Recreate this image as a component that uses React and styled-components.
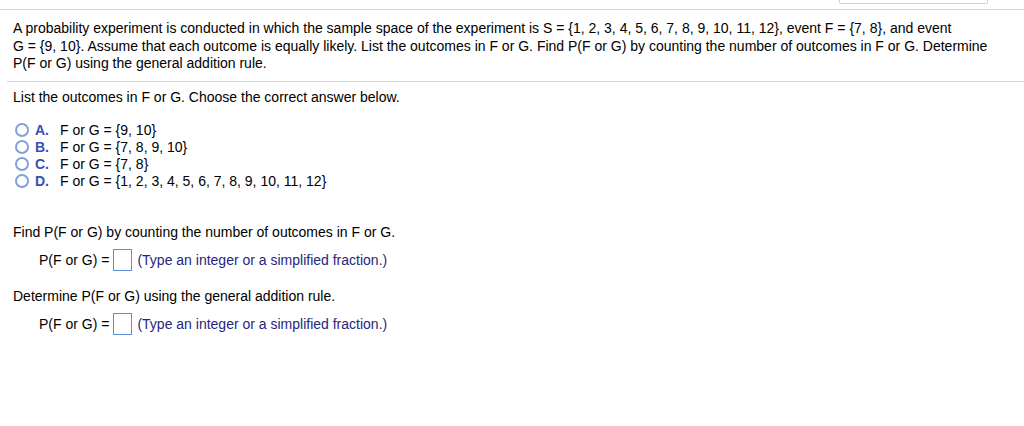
import React from "react";
import styled, { createGlobalStyle } from "styled-components";

const Global = createGlobalStyle`
  html, body { margin: 0; padding: 0; background: #fff; }
  body { font-family: "Liberation Sans", Arial, sans-serif; font-size: 14px; color: #000; }
`;

const Page = styled.div`
  width: 1024px;
  height: 426px;
  overflow: hidden;
`;

const TopStrip = styled.div`
  height: 9px;
  border-bottom: 1px solid #cdd2dc;
  display: flex;
  justify-content: flex-end;
  padding-right: 36px;
`;

const Tab = styled.div`
  width: 147px;
  height: 3px;
  border: 1px solid #d3d3d3;
  border-top: none;
  border-radius: 0 0 2px 2px;
`;

const Question = styled.p`
  margin: 0;
  padding: 10px 10px 8px 13px;
  line-height: 17.5px;
  white-space: nowrap;
`;

const Divider = styled.div`
  margin-left: 7px;
  border-top: 1px solid #cdd2dc;
`;

const Body = styled.div`
  padding: 6px 0 0 13px;
`;

const Prompt = styled.div`
  line-height: 18px;
  margin-bottom: ${(p) => p.$mb || 0}px;
`;

const Options = styled.div`
  display: flex;
  flex-direction: column;
  padding-left: 2px;
  margin-bottom: 33px;
`;

const Option = styled.label`
  display: flex;
  align-items: center;
  height: 17px;
`;

const Radio = styled.span`
  width: 10px;
  height: 10px;
  border: 2px solid #84a0d8;
  border-radius: 50%;
  box-sizing: content-box;
  margin-right: 6px;
`;

const Letter = styled.span`
  color: #3550b8;
  font-weight: bold;
  width: 25px;
`;

const AnswerRow = styled.div`
  display: flex;
  align-items: center;
  padding-left: 26px;
  height: 22px;
  margin-bottom: ${(p) => p.$mb || 0}px;
`;

const InputBox = styled.span`
  width: 17px;
  height: 20px;
  border: 1px solid #5d8ed8;
  margin: 0 5px 0 4px;
`;

const Hint = styled.span`
  color: #26267e;
`;

const options = [
  ["A.", "F or G = {9, 10}"],
  ["B.", "F or G = {7, 8, 9, 10}"],
  ["C.", "F or G = {7, 8}"],
  ["D.", "F or G = {1, 2, 3, 4, 5, 6, 7, 8, 9, 10, 11, 12}"],
];

export default function App() {
  return (
    <Page>
      <Global />
      <TopStrip>
        <Tab />
      </TopStrip>
      <Question>
        A probability experiment is conducted in which the sample space of the experiment is S = {"{"}1, 2, 3, 4, 5, 6, 7, 8, 9, 10, 11, 12{"}"}, event F = {"{"}7, 8{"}"}, and event
        <br />
        G = {"{"}9, 10{"}"}. Assume that each outcome is equally likely. List the outcomes in F or G. Find P(F or G) by counting the number of outcomes in F or G. Determine
        <br />
        P(F or G) using the general addition rule.
      </Question>
      <Divider />
      <Body>
        <Prompt $mb={16}>List the outcomes in F or G. Choose the correct answer below.</Prompt>
        <Options>
          {options.map(([l, t]) => (
            <Option key={l}>
              <Radio />
              <Letter>{l}</Letter>
              <span>{t}</span>
            </Option>
          ))}
        </Options>
        <Prompt $mb={8}>Find P(F or G) by counting the number of outcomes in F or G.</Prompt>
        <AnswerRow $mb={16}>
          P(F or G) =<InputBox />
          <Hint>(Type an integer or a simplified fraction.)</Hint>
        </AnswerRow>
        <Prompt $mb={8}>Determine P(F or G) using the general addition rule.</Prompt>
        <AnswerRow>
          P(F or G) =<InputBox />
          <Hint>(Type an integer or a simplified fraction.)</Hint>
        </AnswerRow>
      </Body>
    </Page>
  );
}
